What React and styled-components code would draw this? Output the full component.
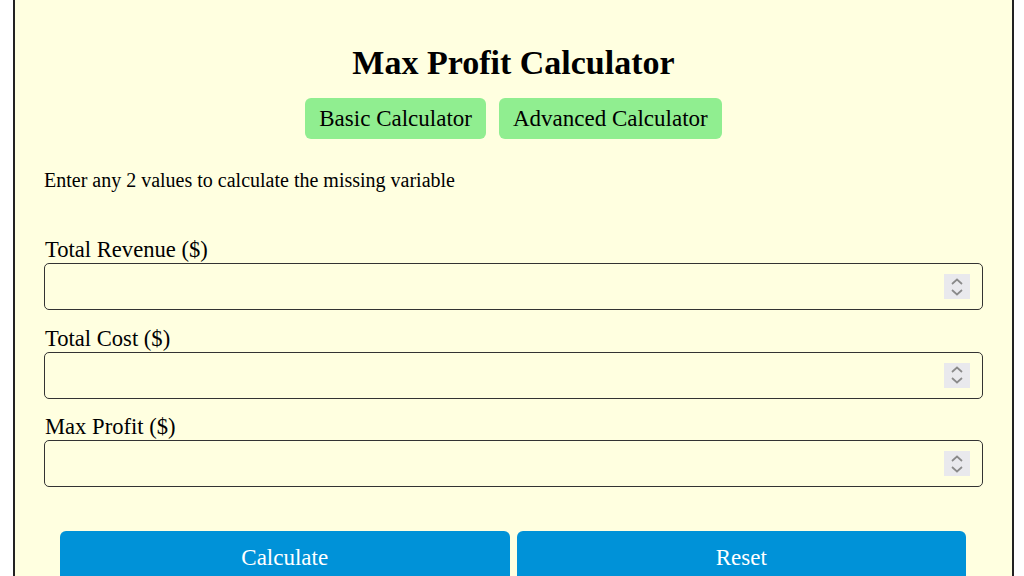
import React, { useState } from "react";
import styled, { createGlobalStyle } from "styled-components";

const GlobalStyle = createGlobalStyle`
    html, body {
        margin: 0;
        padding: 0;
        background: #ffffff;
    }

    body {
        font-family: "Liberation Serif", "Times New Roman", serif;
        color: #000;
    }
`;

const fields = [
    { key: "revenue", label: "Total Revenue ($)" },
    { key: "cost", label: "Total Cost ($)" },
    { key: "profit", label: "Max Profit ($)" },
];

export default function App() {
    const [mode, setMode] = useState("basic");
    const [values, setValues] = useState({ revenue: "", cost: "", profit: "" });

    const update = (key) => (e) => setValues({ ...values, [key]: e.target.value });

    const step = (key, d) => {
        const n = parseFloat(values[key]) || 0;
        setValues({ ...values, [key]: String(n + d) });
    };

    const calculate = () => {
        const r = parseFloat(values.revenue);
        const c = parseFloat(values.cost);
        const p = parseFloat(values.profit);
        if (!isNaN(r) && !isNaN(c)) setValues({ ...values, profit: String(r - c) });
        else if (!isNaN(r) && !isNaN(p)) setValues({ ...values, cost: String(r - p) });
        else if (!isNaN(c) && !isNaN(p)) setValues({ ...values, revenue: String(c + p) });
    };

    const reset = () => setValues({ revenue: "", cost: "", profit: "" });

    return (
        <>
            <GlobalStyle />
            <Container>
                <Title>Max Profit Calculator</Title>
                <Tabs>
                    <Tab onClick={() => setMode("basic")}>Basic Calculator</Tab>
                    <Tab onClick={() => setMode("advanced")}>Advanced Calculator</Tab>
                </Tabs>
                <Hint>Enter any 2 values to calculate the missing variable</Hint>
                <Form>
                    {fields.map((f) => (
                        <Field key={f.key}>
                            <Label htmlFor={f.key}>{f.label}</Label>
                            <InputWrap>
                                <Input
                                    id={f.key}
                                    type="number"
                                    value={values[f.key]}
                                    onChange={update(f.key)}
                                />
                                <Spinner>
                                    <SpinHalf onClick={() => step(f.key, 1)}>
                                        <svg width="14" height="9" viewBox="0 0 14 9">
                                            <path d="M2 7 L7 2.5 L12 7" fill="none" stroke="#8a8a8a" strokeWidth="1.7" />
                                        </svg>
                                    </SpinHalf>
                                    <SpinHalf onClick={() => step(f.key, -1)}>
                                        <svg width="14" height="9" viewBox="0 0 14 9">
                                            <path d="M2 2 L7 6.5 L12 2" fill="none" stroke="#8a8a8a" strokeWidth="1.7" />
                                        </svg>
                                    </SpinHalf>
                                </Spinner>
                            </InputWrap>
                        </Field>
                    ))}
                </Form>
                <Actions>
                    <ActionButton onClick={calculate}>Calculate</ActionButton>
                    <ActionButton onClick={reset}>Reset</ActionButton>
                </Actions>
            </Container>
        </>
    );
}

const Container = styled.div`
    width: 1001px;
    box-sizing: border-box;
    margin: 0 0 0 13px;
    min-height: 600px;
    background-color: #ffffe0;
    border: 2px solid #222;
    border-top: none;
    padding: 44px 29px 40px 29px;
`;

const Title = styled.h1`
    margin: 0;
    text-align: center;
    font-size: 34px;
    font-weight: 700;
    line-height: 37px;
`;

const Tabs = styled.div`
    margin-top: 17px;
    display: flex;
    justify-content: center;
    gap: 13px;
`;

const Tab = styled.button`
    font-family: "Liberation Serif", "Times New Roman", serif;
    font-size: 23px;
    line-height: 25px;
    padding: 8px 14px;
    background-color: #90ee90;
    color: #000;
    border: none;
    border-radius: 6px;
    cursor: pointer;
`;

const Hint = styled.p`
    margin: 30px 0 0 0;
    font-size: 20px;
    line-height: 22px;
`;

const Form = styled.div`
    margin-top: 46px;
    display: flex;
    flex-direction: column;
    gap: 15.6px;
`;

const Field = styled.div`
    display: flex;
    flex-direction: column;
    gap: 0;
`;

const Label = styled.label`
    font-size: 22.6px;
    line-height: 26px;
    padding-left: 1px;
`;

const InputWrap = styled.div`
    position: relative;
`;

const Input = styled.input`
    box-sizing: border-box;
    display: block;
    height: 47px;
    width: 100%;
    padding: 0 50px 0 12px;
    font-family: "Liberation Serif", "Times New Roman", serif;
    font-size: 20px;
    background: transparent;
    border: 1px solid #333;
    border-radius: 5px;
    outline: none;
    -moz-appearance: textfield;

    &::-webkit-outer-spin-button,
    &::-webkit-inner-spin-button {
        -webkit-appearance: none;
        margin: 0;
    }
`;

const Spinner = styled.div`
    position: absolute;
    right: 13px;
    top: 11px;
    width: 26px;
    height: 25px;
    background-color: #e9e9ed;
    display: flex;
    flex-direction: column;
    align-items: center;
    justify-content: center;
    gap: 1px;
`;

const SpinHalf = styled.div`
    height: 10px;
    display: flex;
    align-items: center;
    justify-content: center;
    cursor: pointer;
`;

const Actions = styled.div`
    margin-top: 44px;
    padding: 0 17px 0 16px;
    display: flex;
    gap: 7px;
`;

const ActionButton = styled.button`
    flex: 1;
    height: 54px;
    font-family: "Liberation Serif", "Times New Roman", serif;
    font-size: 23px;
    color: #fff;
    background-color: #0092d8;
    border: none;
    border-radius: 6px;
    cursor: pointer;
`;
